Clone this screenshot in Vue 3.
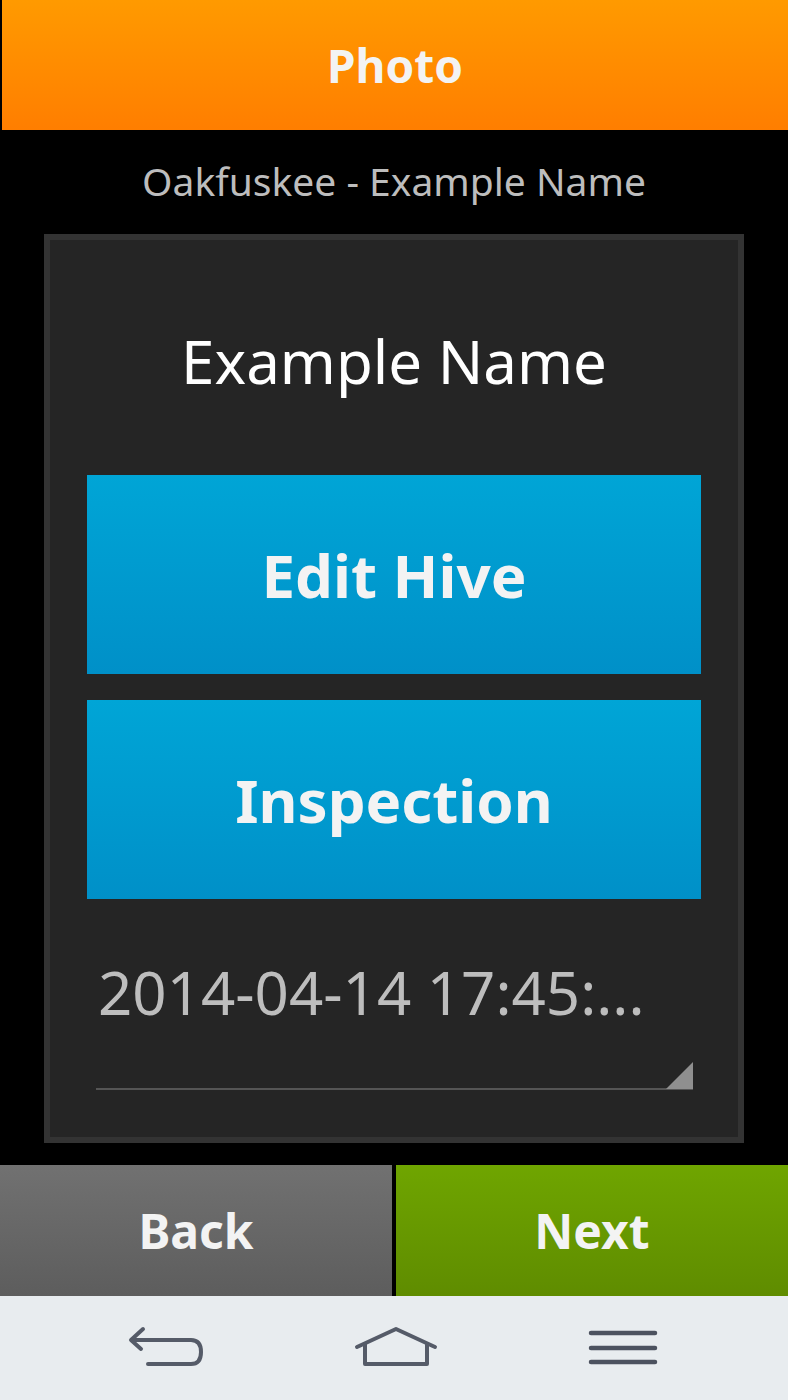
<template>
  <div class="screen">
    <header class="top-bar">Photo</header>
    <p class="location">Oakfuskee - Example Name</p>

    <section class="card">
      <h1 class="hive-name">Example Name</h1>
      <div class="actions">
        <button class="action-btn">Edit Hive</button>
        <button class="action-btn">Inspection</button>
      </div>
      <div class="date-select">
        <span class="date-text">{{ fecha }}</span>
        <span class="date-corner"></span>
      </div>
    </section>

    <div class="footer-btns">
      <button class="foot-btn back">Back</button>
      <button class="foot-btn next">Next</button>
    </div>

    <nav class="nav-bar">
      <svg class="nav-icon" width="80" height="44" viewBox="0 0 80 44" fill="none" stroke="#555b68" stroke-width="4" stroke-linecap="round" stroke-linejoin="round">
        <path d="M16 3 L4 14 L14 23" />
        <path d="M5 14 H64 Q74 14 74 26 Q74 38 64 38 H21" />
      </svg>
      <svg class="nav-icon" width="84" height="44" viewBox="0 0 84 44" fill="none" stroke="#555b68" stroke-width="4" stroke-linecap="round" stroke-linejoin="round">
        <path d="M3 21 L42 3 L81 21" />
        <path d="M11 18 V38 H73 V18" />
      </svg>
      <svg class="nav-icon" width="70" height="44" viewBox="0 0 70 44" fill="none" stroke="#4c525f" stroke-width="4.5" stroke-linecap="round">
        <path d="M3 7 H67" />
        <path d="M3 22 H67" />
        <path d="M3 36 H67" />
      </svg>
    </nav>
  </div>
</template>

<script setup>
const fecha = '2014-04-14 17:45:...'
</script>

<style>
body {
  background: #000;
}
</style>

<style scoped>
.screen {
  width: 788px;
  height: 1400px;
  background: #000;
  display: flex;
  flex-direction: column;
  font-family: "Noto Sans", "Open Sans", sans-serif;
  overflow: hidden;
}

.top-bar {
  height: 130px;
  margin-left: 2px;
  display: flex;
  align-items: center;
  justify-content: center;
  background: linear-gradient(to bottom, #ff9a00, #ff7e00);
  color: #f3f3f3;
  font-size: 46px;
  font-weight: 700;
}

.location {
  height: 104px;
  margin: 0;
  padding-bottom: 4px;
  box-sizing: border-box;
  display: flex;
  align-items: center;
  justify-content: center;
  color: #bdbdbd;
  font-size: 39px;
}

.card {
  width: 700px;
  height: 909px;
  margin-left: 44px;
  box-sizing: border-box;
  border: 6px solid #333;
  background: #252525;
  padding: 0 37px;
  display: flex;
  flex-direction: column;
}

.hive-name {
  height: 236px;
  margin: 0;
  padding-top: 6px;
  box-sizing: border-box;
  display: flex;
  align-items: center;
  justify-content: center;
  color: #fff;
  font-size: 60px;
  font-weight: 400;
}

.actions {
  display: flex;
  flex-direction: column;
  gap: 26px;
}

.action-btn {
  height: 199px;
  border: none;
  padding: 0;
  background: linear-gradient(to bottom, #00a5d6, #0090c8);
  color: #f3f3f3;
  font-family: inherit;
  font-size: 60px;
  font-weight: 700;
}

.date-select {
  position: relative;
  height: 191px;
  margin: 0 8px 0 9px;
  box-sizing: border-box;
  border-bottom: 2px solid #555;
  display: flex;
  align-items: flex-end;
  margin-bottom: 47px;
}

.date-text {
  padding: 0 0 55px 2px;
  color: #bdbdbd;
  font-size: 60px;
  line-height: 82px;
  white-space: nowrap;
}

.date-corner {
  position: absolute;
  right: 0;
  bottom: -1px;
  width: 27px;
  height: 27px;
  background: #8f8f8f;
  clip-path: polygon(100% 0, 100% 100%, 0 100%);
}

.footer-btns {
  margin-top: 22px;
  height: 131px;
  display: flex;
  gap: 4px;
}

.foot-btn {
  flex: 1;
  border: none;
  padding: 0;
  color: #f3f3f3;
  font-family: inherit;
  font-size: 48px;
  font-weight: 700;
}

.back {
  background: linear-gradient(to bottom, #717171, #5d5d5d);
}

.next {
  background: linear-gradient(to bottom, #6fa500, #5f8c00);
}

.nav-bar {
  height: 104px;
  background: #e8ecef;
  display: grid;
  grid-template-columns: 334px 124px 330px;
  justify-items: center;
  align-items: center;
}
</style>
